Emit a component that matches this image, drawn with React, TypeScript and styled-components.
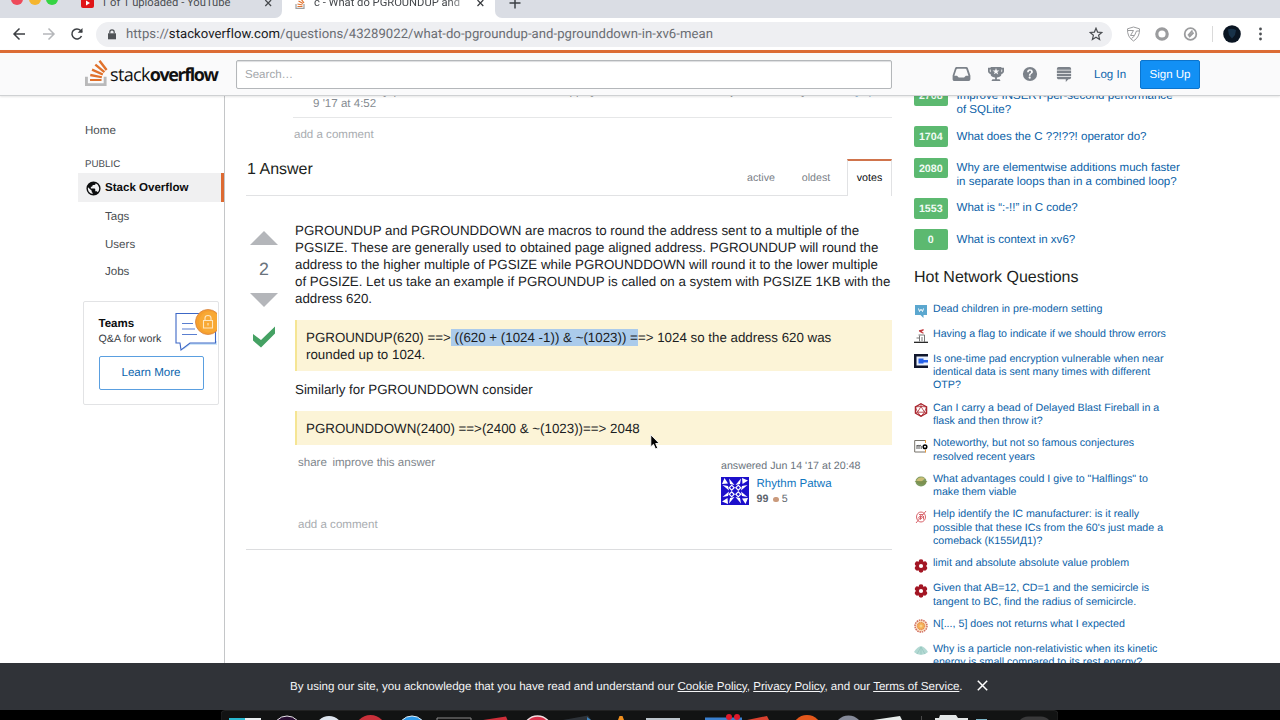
import React from 'react';
import styled, { createGlobalStyle, css } from 'styled-components';

const Global = createGlobalStyle`
  * { box-sizing: border-box; }
  html, body { margin: 0; padding: 0; background: #fff; }
  body {
    width: 1280px; height: 720px; overflow: hidden;
    font-family: "Liberation Sans", Arial, sans-serif;
    font-size: 11.56px; color: #242729;
    text-rendering: geometricPrecision;
  }
  svg { display: block; flex: none; }
`;

const Screen = styled.div`
  width: 1280px; height: 720px; overflow: hidden;
  display: flex; flex-direction: column; position: relative;
`;

/* ---------- browser chrome ---------- */
const TabStrip = styled.div`
  height: 18px; flex: none; background: #dadde4; display: flex; overflow: hidden;
  font-family: Roboto, "Liberation Sans", sans-serif; font-size: 11.2px; color: #4a4d52;
`;
const Lights = styled.div`
  width: 81px; padding: 0 0 0 11px; display: flex; gap: 5.6px; margin-top: -7px;
`;
const Light = styled.i<{ c: string }>`
  width: 12px; height: 12px; border-radius: 50%; background: ${p => p.c};
`;
const Tab = styled.div<{ active?: boolean; w: number }>`
  width: ${p => p.w}px; height: 18px; display: flex; align-items: flex-start;
  ${p => p.active && css`background: #fff; color: #45484c;`}
`;
const TabTitle = styled.span<{ w: number; fade?: boolean; gap: number }>`
  width: ${p => p.w}px; margin-left: ${p => p.gap}px; white-space: nowrap;
  height: 22px; line-height: 14px; margin-top: -4px;
  ${p => p.fade && css`mask-image: linear-gradient(90deg, #000 88%, rgba(0,0,0,.3));`}
`;
const Rest = styled.div`
  flex: 1; padding: 0 0 0 13px; background: #dadde4; border-bottom-left-radius: 7px;
`;
const StripBack = styled.div`flex: 1; display: flex; background: #fff;`;
const LeftTabs = styled.div`
  display: flex; width: 282px; background: #dadde4; border-bottom-right-radius: 7px;
`;
const Toolbar = styled.div`
  height: 32px; flex: none; background: #fff; display: flex; align-items: center;
  padding: 0 0 0 12px;
`;
const NavIcons = styled.div`display: flex; width: 84px; gap: 14px;`;
const Omnibox = styled.div`
  width: 1016px; height: 25px; border-radius: 13px; background: #eeeff2;
  display: flex; align-items: center; padding: 0 9px 1px 11px; color: #6a6d72;
  font-family: Roboto, "Liberation Sans", sans-serif; font-size: 13.14px; margin-top: 1px;
`;
const Url = styled.span`
  flex: 1; margin-left: 9px; white-space: nowrap; letter-spacing: 0.04px; padding-top: 1px;
  b { font-weight: 400; color: #18191b; }
`;
const Extensions = styled.div`display: flex; align-items: center; gap: 14px; margin-left: 14px;`;
const Divider = styled.i`width: 1px; height: 16px; background: #dadada; margin-right: -4px;`;

/* ---------- site header ---------- */
const Header = styled.header`
  height: 46px; flex: none; border-top: 3px solid #dc6c35; background: #fafafb;
  border-bottom: 1px solid #cfd1d3; box-shadow: 0 1px 2px rgba(0,0,0,.1);
  display: flex; align-items: center; padding-left: 85px; position: relative; z-index: 1;
`;
const Logo = styled.div`
  width: 151px; display: flex; align-items: flex-start; height: 29px;
`;
const Wordmark = styled.span`
  font-family: "Open Sans", sans-serif; font-size: 18px; line-height: 24px; margin: 3px 0 0 2px;
  color: #111; letter-spacing: -0.65px; white-space: nowrap;
  b { font-weight: 700; letter-spacing: -1.45px; }
`;
const Search = styled.div`
  width: 656px; height: 29px; border: 1px solid #b4b7ba; border-radius: 2px; background: #fff;
  padding: 0 8px; line-height: 28px; color: #a3a7ab;
  box-shadow: inset 0 1px 1px #dcdddf;
`;
const HeaderIcons = styled.div`
  display: flex; align-items: center; margin-left: 60px; gap: 18px; width: 142px; fill: #7c828a;
  svg:first-child { margin-right: -1px; }
`;
const LogIn = styled.a`color: #0b65ad; width: 46px; padding-top: 1px;`;
const SignUp = styled.a`
  width: 60px; height: 29px; border-radius: 2px; background: #1290f5; color: #fff;
  border: 1px solid #0b74cd; line-height: 28px; text-align: center;
`;

/* ---------- page ---------- */
const Page = styled.div`
  height: 567px; flex: none; overflow: hidden; display: flex; padding-left: 78px;
`;
const Nav = styled.nav`
  width: 147px; border-right: 1px solid #c4c6c8; color: #4a4e52; padding-top: 26px;
  height: 567px; flex: none;
`;
const NavRow = styled.div<{ indent?: boolean; h: number }>`
  height: ${p => p.h}px; display: flex; align-items: center;
  padding-left: ${p => (p.indent ? 27 : 7)}px;
`;
const NavHeading = styled(NavRow)`font-size: 9.78px; padding-top: 16px;`;
const CurrentRow = styled(NavRow)`
  background: #f0f0f1; border-right: 3px solid #dd6a32; color: #0c0d0e; font-weight: 700; gap: 4px;
  padding-left: 8px; padding-top: 1.5px;
`;
const TeamsCard = styled.div`
  margin: 15px 0 0 5px; width: 136px; height: 104px; border: 1px solid #e2e3e5; border-radius: 2px;
  padding: 7px 0 0 14.500px; display: flex; flex-direction: column;
`;
const TeamsTop = styled.div`display: flex; height: 47px;`;
const TeamsText = styled.div`
  width: 75px; padding-top: 7px; font-size: 10.67px; line-height: 15px; white-space: nowrap; color: #3b4045;
  b { display: block; font-size: 11.56px; color: #0c0d0e; line-height: 16px; }
`;
const LearnMore = styled.a`
  width: 105px; height: 34px; border: 1px solid #5a9fe0; border-radius: 2px; color: #0b65ad;
  display: flex; align-items: center; justify-content: center; padding-top: 0.5px;
`;

const Main = styled.main`
  width: 646px; margin-left: 21px; flex: none; display: flex; flex-direction: column;
`;
const CommentBlock = styled.div`
  margin-left: 47px; height: 22px; flex: none; padding-left: 20px; border-bottom: 1px solid #e6e7e8;
  line-height: 14.6px; color: #858b91; display: flex; flex-direction: column;
`;
const CommentLine = styled.div`
  display: flex; margin-top: -14px; height: 15px; line-height: 18px; flex: none; color: #242729; white-space: nowrap;
`;
const Fragment = styled.span<{ w: number; link?: boolean }>`
  width: ${p => p.w}px; text-align: right; ${p => p.link && css`color: #0b65ad;`}
`;
const AddComment = styled.div<{ left: number; h: number }>`
  margin-left: ${p => p.left}px; height: ${p => p.h}px; flex: none; display: flex; align-items: center; color: #a8acb0;
`;
const AnswersHeader = styled.div`
  height: 45px; flex: none; display: flex; justify-content: space-between; border-bottom: 1px solid #e1e2e4;
`;
const AnswersTitle = styled.h2`margin: 8px 0 0 1px; font-size: 16px; font-weight: 400; line-height: 22px; color: #1d1f21;`;
const Tabs = styled.div`display: flex; font-size: 10.67px; color: #7a8087; margin-top: 8px;`;
const SortTab = styled.div<{ w: number; active?: boolean }>`
  width: ${p => p.w}px; height: 37px; display: flex; align-items: center; justify-content: center;
  ${p => p.active && css`
    color: #0c0d0e; background: #fff; border: 1px solid #e1e2e4; border-top: 2px solid #d0744c; border-bottom: 0;
    padding-bottom: 2px;
  `}
`;
const Answer = styled.article`display: flex; height: 354px; flex: none; border-bottom: 1px solid #dcdddf; padding-top: 26px;`;
const Votes = styled.div`
  width: 49px; padding: 9px 17px 0 4px; display: flex; flex-direction: column; align-items: center;
`;
const VoteCount = styled.div`
  font-size: 17.8px; color: #6a737c; height: 48px; line-height: 49px;
`;
const Accepted = styled.div`margin-top: 19px;`;
const Body = styled.div`
  width: 597px; font-size: 13.34px; line-height: 17px; color: #1b1d1f; white-space: nowrap;
`;
const Para = styled.p`margin: 0; padding-bottom: 13px;`;
const Quote = styled.blockquote`
  margin: 0 0 10px; padding: 8.5px 9px 8.5px 9px; border-left: 2px solid #f5e594; background: #fcf4d7;
`;
const Selected = styled.span`background: #abcbeb; padding: 1px 0;`;
const PostFoot = styled.div`
  display: flex; justify-content: space-between; font-size: 11.56px; color: #80868c; height: 62px;
`;
const Menu = styled.div`display: flex; gap: 5.5px; padding: 0 0 0 3px;`;
const Signature = styled.div`width: 171px; color: #6a737c; font-size: 10.67px; line-height: 15px; padding-top: 4px;`;
const UserRow = styled.div`display: flex; gap: 7.5px; margin-top: 3px;`;
const UserInfo = styled.div`
  line-height: 15px;
  a { display: block; font-size: 11.56px; color: #1176c0; }
`;
const Rep = styled.div`
  display: flex; align-items: center; color: #5b636b;
  i { width: 5.5px; height: 5.5px; border-radius: 50%; background: #ca9a7c; margin: 0 3px 0 5px; }
`;

const Aside = styled.aside`width: 290px; margin-left: 22px; flex: none; color: #0b62a8;`;
const Related = styled.div`margin-top: -10.7px; height: 173px;`;
const RelatedItem = styled.div<{ h: number }>`
  height: ${p => p.h}px; display: flex; line-height: 14px; white-space: nowrap;
`;
const Score = styled.span`
  width: 33.5px; height: 20.6px; border-radius: 2px; background: #5cb970; color: #f2fbf4;
  font-size: 10.67px; font-weight: 700; text-align: center; line-height: 22px; margin-right: 9px;
`;
const RelatedText = styled.span`padding-top: 3.2px;`;
const HotTitle = styled.h3`margin: 10px 0 14.5px; font-weight: 400; font-size: 16px; line-height: 20px; color: #1d1f21;`;
const HotItem = styled.div`
  display: flex; min-height: 16px; margin-bottom: 8.95px; font-size: 10.67px; line-height: 13.33px; white-space: nowrap;
  svg { margin: 1.5px 5px 0 0; }
`;

/* ---------- bottom ---------- */
const CookieBar = styled.div`
  height: 47px; flex: none; background: #303338; color: #f4f5f6; display: flex; align-items: center;
  padding-left: 290px; white-space: nowrap; font-size: 11.58px;
  u { text-underline-offset: 1px; }
  svg { margin: -2px 0 0 14px; }
`;
const Dock = styled.div`
  height: 10px; flex: none; background: #000; padding-left: 221px;
`;
const Pointer = styled.div`position: absolute; left: 650px; top: 434px;`;

const SiteIcon = ({ kind }: { kind: string }) => {
  const s = { width: 14, height: 14, viewBox: '0 0 14 14' };
  switch (kind) {
    case 'world':
      return (
        <svg {...s}><path d="M1 1h12v10H9.500v3L6.500 11H1z" fill="#5ba7cf" />
          <path d="M4.500 4.500l1 3L7 5.200l1.500 2.300 1-3" stroke="#fff" fill="none" strokeWidth="1" /></svg>
      );
    case 'code':
      return (
        <svg {...s}><path d="M0 13.300h14" stroke="#111" strokeWidth="1.200" />
          <path d="M4.500 6h6v7M5.500 6.500v6M2.500 9h3M8 8v4" stroke="#777" fill="none" />
          <path d="M5 1.800l4.500-1-3 2 3 1.500" stroke="#c33a3f" fill="none" strokeWidth="1.200" /></svg>
      );
    case 'crypto':
      return (
        <svg {...s}><path d="M0 0h14v14H0z" fill="#10162c" /><path d="M2.500 2.500h11.500v9H2.500z" fill="#e9f0fc" />
          <path d="M4.500 4.500h5v5h-5z" fill="#2661ea" /><path d="M9 6h5v2.500H9z" fill="#2661ea" /></svg>
      );
    case 'rpg':
      return (
        <svg {...s} fill="none" stroke="#ab2830"><path d="M7 .7l5.600 3.200v6.200L7 13.300 1.400 10.100V3.900z" strokeWidth="1.300" />
          <path d="M7 3.500l3.500 5.700h-7zM7 .7v2.800M1.400 3.900L7 3.500l5.600.4-2.100 5.300 2.100.9M3.500 9.200L1.400 10.100M1.400 3.900l2.100 5.300L7 13.300l3.500-4.100" strokeWidth=".8" /></svg>
      );
    case 'mo':
      return (
        <svg {...s} fill="none"><path d="M11.500 1.500H.7v11.500h10.800" stroke="#77736b" /><path d="M11.500 1v3M11.500 10.500v3" stroke="#e89a3c" />
          <path d="M3 10V6M3 7q1.300-1.500 2 0v3M5 7q1.300-1.500 2.200 0v3" stroke="#555" />
          <circle cx="11" cy="7.800" r="1.800" stroke="#000" strokeWidth="1.500" /></svg>
      );
    case 'world2':
      return (
        <svg {...s}><ellipse cx="7" cy="7.500" rx="5.500" ry="5" fill="#7d9b62" />
          <path d="M2 6.500Q6 1 11 4.500L7 8z" fill="#c9bd75" /><path d="M.5 7h13L10 10.500Q5 11 .5 7z" fill="#7d8f4c" opacity=".8" /></svg>
      );
    case 'ee':
      return (
        <svg {...s} fill="none" stroke="#d4525a" strokeWidth=".9"><ellipse cx="7" cy="7" rx="4.500" ry="5" />
          <path d="M2 13L12 1M4 8.500l2.500-3v4l3-3.500v3.500M5 4.500h4" /></svg>
      );
    case 'math':
      return (
        <svg {...s} fill="#a31624">{[0, 60, 120, 180, 240, 300].map(a => (
          <circle key={a} cx="7" cy="2.700" r="2.400" transform={`rotate(${a} 7 7)`} />))}
          <circle cx="7" cy="7" r="3.900" /><circle cx="7" cy="7" r="2.100" fill="#fff" /></svg>
      );
    case 'mma':
      return (
        <svg {...s}><circle cx="7" cy="7" r="6" fill="#fbe0c4" stroke="#cf6a5b" strokeDasharray="1.500 .8" strokeWidth="1.500" />
          <circle cx="7" cy="7" r="3.700" fill="#f4ad55" stroke="#dd7f4b" strokeDasharray="1.300 .8" /><circle cx="7" cy="7" r="1.500" fill="#f9d287" /></svg>
      );
    default:
      return (
        <svg {...s}><path d="M0 8Q3 3 7 2q4 1 7 6-3 3-7 3T0 8z" fill="#b3d9d3" /><path d="M3 10L7 3l4 7M7 3v7" stroke="#93c4bd" fill="none" strokeWidth=".7" /></svg>
      );
  }
};

const related = [
  { n: '2708', h: 41, t: ['Improve INSERT-per-second performance', 'of SQLite?'] },
  { n: '1704', h: 31.2, t: ['What does the C ??!??! operator do?'] },
  { n: '2080', h: 40.8, t: ['Why are elementwise additions much faster', 'in separate loops than in a combined loop?'] },
  { n: '1553', h: 31.2, t: ['What is “:-!!” in C code?'] },
  { n: '0', h: 21, t: ['What is context in xv6?'] },
];

const hot = [
  { k: 'world', t: ['Dead children in pre-modern setting'] },
  { k: 'code', t: ['Having a flag to indicate if we should throw errors'] },
  { k: 'crypto', t: ['Is one-time pad encryption vulnerable when near', 'identical data is sent many times with different', 'OTP?'] },
  { k: 'rpg', t: ['Can I carry a bead of Delayed Blast Fireball in a', 'flask and then throw it?'] },
  { k: 'mo', t: ['Noteworthy, but not so famous conjectures', 'resolved recent years'] },
  { k: 'world2', t: ['What advantages could I give to "Halflings" to', 'make them viable'] },
  { k: 'ee', t: ['Help identify the IC manufacturer: is it really', "possible that these ICs from the 60's just made a", 'comeback (К155ИД1)?'] },
  { k: 'math', t: ['limit and absolute absolute value problem'] },
  { k: 'math', t: ['Given that AB=12, CD=1 and the semicircle is', 'tangent to BC, find the radius of semicircle.'] },
  { k: 'mma', t: ['N[..., 5] does not returns what I expected'] },
  { k: 'physics', t: ['Why is a particle non-relativistic when its kinetic', 'energy is small compared to its rest energy?'] },
];

const Lines = ({ t }: { t: string[] }) => (
  <>{t.map((l, i) => <React.Fragment key={l}>{i > 0 && <br />}{l}</React.Fragment>)}</>
);

const StackGlyph = ({ w, h }: { w: number; h: number }) => (
  <svg width={w} height={h} viewBox="0 0 32 37" preserveAspectRatio="none">
    <path d="M26 33v-9h4v13H0V24h4v9h22z" fill="#b9b9ba" />
    <path d="M21.500 0l-2.700 2 9.900 13.300 2.700-2L21.500 0zM26 18.400L13.300 7.800l2.100-2.500 12.700 10.600-2.100 2.500zM9.100 15.200l15 7 1.400-3-15-7-1.400 3zm14 10.790l.68-2.950-16.100-3.350L7 23l16.100 2.990zM23 30H7v-3h16v3z" fill="#e0712c" />
  </svg>
);

const Identicon = () => (
  <svg width="28" height="28" viewBox="0 0 28 28">
    <path d="M0 0h28v28H0z" fill="#1c0fcb" />
    {[0, 90, 180, 270].map(a => (
      <g key={a} transform={`rotate(${a} 14 14)`} fill="#fff">
        <path d="M1 7L3.500 1 7 6.500zM8 1.500l5.500 6.500-4.500-1zM20 1.500l-5.500 6.500 4.500-1z" />
        <path d="M10.700 7.400l3.300 3.300-3.300 3.300-3.300-3.300z" />
        <path d="M10.700 9.100l1.600 1.600-1.600 1.600-1.600-1.600z" fill="#1c0fcb" />
      </g>
    ))}
  </svg>
);

const DockIcons = () => (
  <svg width="837" height="10" viewBox="221 710 837 10">
    <path d="M221 722v-8q0-3.500 4-3.500h829q4 0 4 3.500v8z" fill="#121313" stroke="#2c2d2d" strokeWidth=".7" />
    <path d="M229 718h16v2h-16z" fill="#29b8cf" /><path d="M245 718h16v2h-16z" fill="#e9eef0" />
    <circle cx="287" cy="730" r="14" fill="#2a0f33" stroke="#e9e5ec" />
    <circle cx="329" cy="730" r="14" fill="#dde4ee" />
    <circle cx="370.500" cy="731" r="16" fill="#c9303a" />
    <circle cx="412" cy="730" r="14" fill="#2f9bea" stroke="#e4eef6" />
    <path d="M437 722v-4h34v4" fill="#111" stroke="#8b8b8b" />
    <path d="M483 720l23-3.500 1.500 3.500z" fill="#cf2f3a" />
    <circle cx="537.500" cy="730" r="14" fill="#d9314a" stroke="#f3dfe2" strokeWidth="1.500" />
    <path d="M563 720l25-4.500 3 4.500z" fill="#2d3238" /><path d="M587 717l4 3h-4z" fill="#3d84bd" />
    <path d="M618 720l1.500-4h3l1.500 4z" fill="#f08f1f" />
    <path d="M646 718h34v2h-34z" fill="#bcc5cc" />
    <path d="M705 717.500h37v3h-37z" fill="#3a80cf" /><circle cx="729" cy="717" r="3" fill="#e0182c" /><circle cx="737" cy="717" r="3" fill="#e0182c" />
    <path d="M747 720l20-4 2 4z" fill="#d9412f" />
    <circle cx="807" cy="730" r="15" fill="#e4581c" />
    <circle cx="848.500" cy="730" r="14.500" fill="#858a99" />
    <path d="M873 720l27-4 2 4z" fill="#e7eceb" />
    <path d="M921.500 716v4" stroke="#4a4a4a" />
    <path d="M935 720v-2h4l1-3h16l2 3h10v2z" fill="#e3e6e6" />
    <path d="M976 719h11v1h-11z" fill="#7fb6c8" />
    <path d="M1020 720q3-3.500 8-3.500h13q5 0 8 3.500z" fill="#39393a" />
  </svg>
);

export default function App() {
  return (
    <Screen>
      <Global />
      <TabStrip>
        <StripBack>
          <LeftTabs>
            <Lights><Light c="#ee4a5a" /><Light c="#f5b52f" /><Light c="#35d443" /></Lights>
            <Tab w={200}>
              <svg width="13" height="9" viewBox="0 0 13 9"><path d="M0-2h13v8q0 2-2 2H2Q0 8 0 6z" fill="#e01518" /><path d="M5 .5v5L9 3z" fill="#fff" /></svg>
              <TabTitle w={155} gap={7}>1 of 1 uploaded - YouTube</TabTitle>
              <svg width="24" height="9" viewBox="0 0 24 9"><path d="M9.300 0l5.800 6M15.100 0l-5.800 6" stroke="#44474b" strokeWidth="1.200" /></svg>
            </Tab>
          </LeftTabs>
          <Tab w={213} active>
            <svg width="32" height="10" viewBox="0 0 32 10">
              <path d="M14 4v4.300h8V4" stroke="#9f9fa0" fill="none" strokeWidth="1.200" />
              <path d="M15.500 6.500h5M15.500 4l5 1M16.500 1l4.500 2.500M19 -1l3 4" stroke="#e0712c" strokeWidth="1.200" />
            </svg>
            <TabTitle w={152} gap={0} fade>c - What do PGROUNDUP and</TabTitle>
            <svg width="22" height="9" viewBox="0 0 22 9"><path d="M11.500 0l5.800 6M17.300 0l-5.800 6" stroke="#36393d" strokeWidth="1.200" /></svg>
          </Tab>
          <Rest>
            <svg width="14" height="10" viewBox="0 0 14 10"><path d="M7-2v10.500M1.500 3h11" stroke="#3c4044" strokeWidth="1.500" /></svg>
          </Rest>
        </StripBack>
      </TabStrip>
      <Toolbar>
        <NavIcons>
          <svg width="15" height="14" viewBox="0 0 15 14"><path d="M7.500 1.500L2 7l5.500 5.500M2.200 7H13" fill="none" stroke="#3c3f43" strokeWidth="1.500" /></svg>
          <svg width="15" height="14" viewBox="0 0 15 14"><path d="M7.500 1.500L13 7l-5.500 5.500M2 7h10.800" fill="none" stroke="#b5b7ba" strokeWidth="1.500" /></svg>
          <svg width="14" height="14" viewBox="0 0 14 14"><path d="M11.500 9A5 5 0 1 1 10.600 3.500L12 5" fill="none" stroke="#3c3f43" strokeWidth="1.500" /><path d="M12.500 1v4.800H7.700z" fill="#3c3f43" /></svg>
        </NavIcons>
        <Omnibox>
          <svg width="10" height="11" viewBox="0 0 10 11"><path d="M1 4.300h8v6H1z" fill="#505357" /><path d="M2.800 4.500V3a2.200 2.200 0 0 1 4.400 0v1.500" fill="none" stroke="#505357" strokeWidth="1.200" /></svg>
          <Url>https://<b>stackoverflow.com</b>/questions/43289022/what-do-pgroundup-and-pgrounddown-in-xv6-mean</Url>
          <svg width="14" height="14" viewBox="0 0 14 14"><path d="M7 1.200l1.600 3.900 4.200.4-3.200 2.800 1 4.100L7 10.200l-3.600 2.200 1-4.100L1.200 5.500l4.200-.4z" fill="none" stroke="#4b4e52" strokeWidth="1.200" /></svg>
        </Omnibox>
        <Extensions>
          <svg width="15" height="16" viewBox="0 0 15 16" fill="none" stroke="#9b9c9e"><path d="M7.500 1l6 1.800Q14 11 7.500 15 1 11 1.500 2.800z" /><path d="M2 4.500h5.500L4.500 9.500h4l2-4.500H13M5.500 12.500l3-2.500" /></svg>
          <svg width="14" height="14" viewBox="0 0 14 14"><circle cx="7" cy="7" r="5.200" fill="none" stroke="#9b9c9e" strokeWidth="3.200" /></svg>
          <svg width="15" height="14" viewBox="0 0 15 14"><circle cx="7.500" cy="7" r="5.800" fill="none" stroke="#9b9c9e" strokeWidth="1.800" /><path d="M5 8.500L9.500 3.500M6 10l4.500-4.500" stroke="#9b9c9e" strokeWidth="1.800" /></svg>
          <Divider />
          <svg width="18" height="18" viewBox="0 0 18 18"><circle cx="9" cy="9" r="8.800" fill="#0a1522" /><path d="M5 4.500Q9 3 13 5l-1 5-3 3.500L6 10z" fill="#1c3a54" opacity=".8" /></svg>
        </Extensions>
        <svg width="39" height="14" viewBox="0 0 39 14"><g fill="#4b4e52" transform="translate(19.500 0)"><circle cx="0" cy="2" r="1.400" /><circle cx="0" cy="7" r="1.400" /><circle cx="0" cy="12" r="1.400" /></g></svg>
      </Toolbar>

      <Header>
        <Logo>
          <StackGlyph w={23} h={26} />
          <Wordmark>stack<b>overflow</b></Wordmark>
        </Logo>
        <Search>Search…</Search>
        <HeaderIcons>
          <svg width="19" height="16" viewBox="0 0 20 18"><path d="M15.190 1H4.630c-.85 0-1.600.54-1.850 1.350L0 10.790V15c0 1.100.9 2 2 2h16a2 2 0 0 0 2-2v-4.210l-2.870-8.440A2 2 0 0 0 15.190 1zm-.28 10l-2 2h-6l-2-2H1.960L4.400 3.680A1 1 0 0 1 5.350 3h9.120c.43 0 .82.28.95.68L17.860 11h-2.950z" /></svg>
          <svg width="16" height="16" viewBox="0 0 18 18"><path d="M15 2V1H3v1H0v4c0 1.600 1.400 3 3 3v1c.4 1.500 3 2.600 5 3v2H5s-1 1.500-1 2h10c0-.4-1-2-1-2h-3v-2c2-.4 4.600-1.500 5-3V9c1.600-.2 3-1.400 3-3V2h-3zM3 7c-.5 0-1-.5-1-1V4h1v3zm8.400 2.500L9 8 6.600 9.400l1-2.700L5 5h3l1-2.700L10 5h2.800l-2.300 1.800 1 2.700h-.1zM16 6c0 .5-.5 1-1 1V4h1v2z" /></svg>
          <svg width="16" height="16" viewBox="0 0 18 18"><path d="M9 1a8 8 0 1 0 0 16A8 8 0 0 0 9 1zm.81 12.130c-.02.71-.55 1.150-1.240 1.130-.66-.02-1.170-.49-1.150-1.200.02-.72.56-1.180 1.220-1.160.7.03 1.200.51 1.170 1.230zM11.770 8c-.59.66-1.780 1.090-2.050 1.970a4 4 0 0 0-.09.75c0 .05-.03.16-.18.16H7.880c-.16 0-.18-.1-.18-.15.06-1.350.66-2.200 1.830-2.880.39-.29.7-.75.7-1.240.01-1.240-1.640-1.820-2.350-.72-.21.33-.18.73-.18 1.100H5.750c0-1.970 1.030-3.260 3.030-3.260 1.750 0 3.470.87 3.470 2.830 0 .57-.2 1.050-.48 1.440z" /></svg>
          <svg width="16" height="16" viewBox="0 0 18 18"><path d="M15 1H3a2 2 0 0 0-2 2v1.200h16V3a2 2 0 0 0-2-2zM1 13c0 1.100.9 2 2 2h8v3l3-3h1a2 2 0 0 0 2-2v-.8H1zM17 5.200H1v2.600h16zM17 8.800H1v2.500h16z" /></svg>
        </HeaderIcons>
        <LogIn>Log In</LogIn>
        <SignUp>Sign Up</SignUp>
      </Header>

      <Page>
        <Nav>
          <NavRow h={17}>Home</NavRow>
          <NavHeading h={34}>PUBLIC</NavHeading>
          <CurrentRow h={29}>
            <svg width="15" height="15" viewBox="0.500 0.500 17 17"><path d="M9 1a8 8 0 1 0 0 16A8 8 0 0 0 9 1zM8 15.320a6.400 6.400 0 0 1-5.230-7.750L7 11.680v.8c0 .88.12 1.320 1 1.320v1.520zm5.720-2c-.2-.66-1-1.320-1.720-1.320h-1v-2c0-.44-.56-1-1-1H6V7h1c.44 0 1-.56 1-1V5h2c.88 0 1.400-.72 1.400-1.600v-.33a6.400 6.400 0 0 1 2.320 10.240z" fill="#0c0d0e" /></svg>
            Stack Overflow
          </CurrentRow>
          <NavRow h={29.500} indent>Tags</NavRow>
          <NavRow h={27} indent>Users</NavRow>
          <NavRow h={27.500} indent>Jobs</NavRow>
          <TeamsCard>
            <TeamsTop>
              <TeamsText><b>Teams</b>Q&amp;A for work</TeamsText>
              <svg width="43" height="42" viewBox="0 0 43 42">
                <path d="M9 41l7-5h27v-4H14z" fill="#cfe6f8" />
                <path d="M2 4.500h39.500V34H16l-9 7-1-7H2z" fill="#fff" stroke="#3c67c6" strokeWidth="1.100" />
                <path d="M8 14.500h11M8 20h13M8 25.500h15" stroke="#5a7fd0" strokeWidth="1.200" />
                <circle cx="34" cy="13" r="12.500" fill="#f6a02e" stroke="#d7803c" strokeWidth=".8" />
                <circle cx="35.500" cy="13" r="10.500" fill="#f9ab37" opacity=".8" />
                <path d="M29.500 11.500h9v7.500h-9z" fill="none" stroke="#ffe7bf" strokeWidth="1.100" />
                <path d="M31 11V9q0-2.500 3-2.500T37 9v2M34 14v2.500" fill="none" stroke="#ffe7bf" strokeWidth="1.100" />
              </svg>
            </TeamsTop>
            <LearnMore>Learn More</LearnMore>
          </TeamsCard>
        </Nav>

        <Main>
          <CommentBlock>
            <CommentLine>
              <Fragment w={75}>rounding</Fragment><Fragment w={12}>p</Fragment>
              <Fragment w={79}>address,</Fragment><Fragment w={97}>the p</Fragment>
              <Fragment w={24}>page</Fragment><Fragment w={136}>memory</Fragment>
              <Fragment w={70}>being</Fragment><Fragment w={54} link>Greg</Fragment><Fragment w={15} link>p</Fragment>
            </CommentLine>
            9 '17 at 4:52
          </CommentBlock>
          <AddComment left={48} h={33}>add a comment</AddComment>
          <AnswersHeader>
            <AnswersTitle>1 Answer</AnswersTitle>
            <Tabs>
              <SortTab w={48}>active</SortTab>
              <SortTab w={62}>oldest</SortTab>
              <SortTab w={45} active>votes</SortTab>
            </Tabs>
          </AnswersHeader>
          <Answer>
            <Votes>
              <svg width="28" height="14" viewBox="0 0 28 14"><path d="M0 14L14 0l14 14z" fill="#b4b6ba" /></svg>
              <VoteCount>2</VoteCount>
              <svg width="28" height="14" viewBox="0 0 28 14"><path d="M0 0h28L14 14z" fill="#b4b6ba" /></svg>
              <Accepted>
                <svg width="22" height="22" viewBox="0 0 22 22"><path d="M0 8l8 6L22 .5v7L8 21.500 0 14.500z" fill="#45a163" /></svg>
              </Accepted>
            </Votes>
            <Body>
              <Para>
                <Lines t={[
                  'PGROUNDUP and PGROUNDDOWN are macros to round the address sent to a multiple of the',
                  'PGSIZE. These are generally used to obtained page aligned address. PGROUNDUP will round the',
                  'address to the higher multiple of PGSIZE while PGROUNDDOWN will round it to the lower multiple',
                  'of PGSIZE. Let us take an example if PGROUNDUP is called on a system with PGSIZE 1KB with the',
                  'address 620.',
                ]} />
              </Para>
              <Quote>
                PGROUNDUP(620) ==&gt;<Selected> ((620 + (1024 -1)) &amp; ~(1023)) =</Selected>=&gt; 1024 so the address 620 was<br />rounded up to 1024.
              </Quote>
              <Para>Similarly for PGROUNDDOWN consider</Para>
              <Quote>PGROUNDDOWN(2400) ==&gt;(2400 &amp; ~(1023))==&gt; 2048</Quote>
              <PostFoot>
                <Menu><span>share</span><span>improve this answer</span></Menu>
                <Signature>
                  answered Jun 14 '17 at 20:48
                  <UserRow>
                    <Identicon />
                    <UserInfo>
                      <a>Rhythm Patwa</a>
                      <Rep><b>99</b><i />5</Rep>
                    </UserInfo>
                  </UserRow>
                </Signature>
              </PostFoot>
              <PostFoot><AddComment left={3} h={16}>add a comment</AddComment></PostFoot>
            </Body>
          </Answer>
        </Main>

        <Aside>
          <Related>
            {related.map(r => (
              <RelatedItem key={r.n} h={r.h}><Score>{r.n}</Score><RelatedText><Lines t={r.t} /></RelatedText></RelatedItem>
            ))}
          </Related>
          <HotTitle>Hot Network Questions</HotTitle>
          {hot.map(q => (
            <HotItem key={q.t[0]}><SiteIcon kind={q.k} /><span><Lines t={q.t} /></span></HotItem>
          ))}
        </Aside>
      </Page>

      <CookieBar>
        <span>By using our site, you acknowledge that you have read and understand our <u>Cookie Policy</u>, <u>Privacy Policy</u>, and our <u>Terms of Service</u>.</span>
        <svg width="11" height="11" viewBox="0 0 11 11"><path d="M.8 .8l9.400 9.400M10.200 .8L.8 10.200" stroke="#fff" strokeWidth="1.500" /></svg>
      </CookieBar>
      <Dock><DockIcons /></Dock>

      <Pointer>
        <svg width="11" height="16" viewBox="0 0 11 16"><path d="M.8 .8v12l2.700-2.500 2 4.700 2.200-1-2-4.500h3.600z" fill="#000" stroke="#fff" strokeWidth=".9" /></svg>
      </Pointer>
    </Screen>
  );
}
